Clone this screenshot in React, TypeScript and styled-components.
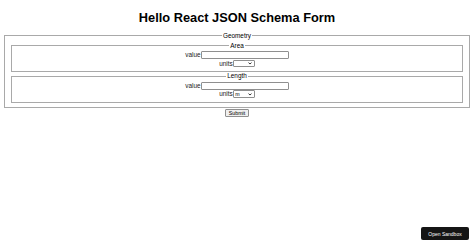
import React from "react";
import styled, { createGlobalStyle } from "styled-components";

const GlobalStyle = createGlobalStyle`
  body {
    margin: 3.2px;
    font-family: "Liberation Sans", Arial, sans-serif;
    font-size: 6.4px;
    color: #000;
    background: #fff;
  }
`;

const Title = styled.h1`
  margin: 6.8px 0 7.2px;
  font-size: 12.8px;
  font-weight: bold;
  text-align: center;
`;

const Fieldset = styled.fieldset`
  margin: 0 0.8px;
  padding: 2px 4.8px 4px;
  border: 1px solid #a9a9a9;
  min-width: 0;
`;

const Legend = styled.legend`
  margin: 0 auto;
  padding: 0 0.8px;
  font-size: 6.4px;
  line-height: 7.4px;
`;

const Row = styled.div`
  display: flex;
  justify-content: center;
  align-items: center;
  height: 8.2px;
`;

const Label = styled.label`
  font-size: 6.4px;
  line-height: 7.4px;
  color: #222;
`;

const TextInput = styled.input`
  box-sizing: border-box;
  width: 88px;
  height: 7.4px;
  margin: 0;
  padding: 0 1px;
  font-size: 5.3px;
  border: 1px solid #8f8f8f;
  border-radius: 1px;
`;

const SelectWrap = styled.span`
  position: relative;
  display: inline-flex;
  svg {
    position: absolute;
    right: 3px;
    top: 2.5px;
    pointer-events: none;
  }
`;

const Select = styled.select<{ $w: number }>`
  box-sizing: border-box;
  width: ${(p) => p.$w}px;
  height: 7.2px;
  margin: 0;
  padding: 0 0 0 1.5px;
  appearance: none;
  font-size: 5.3px;
  line-height: 5px;
  font-family: "Liberation Sans", Arial, sans-serif;
  color: #000;
  border: 1px solid #8f8f8f;
  border-radius: 1px;
  background: #fff;
`;

const Actions = styled.div`
  display: flex;
  justify-content: center;
  margin-top: 0.4px;
`;

const SubmitButton = styled.button`
  box-sizing: border-box;
  height: 8px;
  padding: 0 2.4px;
  font-size: 5.3px;
  font-family: "Liberation Sans", Arial, sans-serif;
  border: 1px solid #8f8f8f;
  border-radius: 1px;
  background: #efefef;
  color: #000;
`;

const SandboxButton = styled.a`
  position: fixed;
  right: 5px;
  bottom: 8px;
  display: flex;
  align-items: center;
  justify-content: center;
  width: 48px;
  height: 13px;
  border-radius: 2px;
  background: #151515;
  color: #fff;
  font-size: 5px;
  text-decoration: none;
`;

const Chevron = () => (
  <svg width="4" height="2.6" viewBox="0 0 8 5">
    <path d="M1 1l3 3 3-3" fill="none" stroke="#000" strokeWidth="1.6" />
  </svg>
);

type FieldProps = { legend: string; unit: string };

const MeasureField = ({ legend, unit }: FieldProps) => (
  <Fieldset>
    <Legend>{legend}</Legend>
    <Row>
      <Label>value</Label>
      <TextInput type="text" />
    </Row>
    <Row>
      <Label>units</Label>
      <SelectWrap>
        <Select $w={22} defaultValue={unit}>
          <option value=""></option>
          <option value="m">m</option>
          <option value="cm">cm</option>
        </Select>
        <Chevron />
      </SelectWrap>
    </Row>
  </Fieldset>
);

export default function App() {
  return (
    <>
      <GlobalStyle />
      <Title>Hello React JSON Schema Form</Title>
      <form onSubmit={(e) => e.preventDefault()}>
        <Fieldset>
          <Legend>Geometry</Legend>
          <MeasureField legend="Area" unit="" />
          <MeasureField legend="Length" unit="m" />
        </Fieldset>
        <Actions>
          <SubmitButton type="submit">Submit</SubmitButton>
        </Actions>
      </form>
      <SandboxButton href="#">Open Sandbox</SandboxButton>
    </>
  );
}
